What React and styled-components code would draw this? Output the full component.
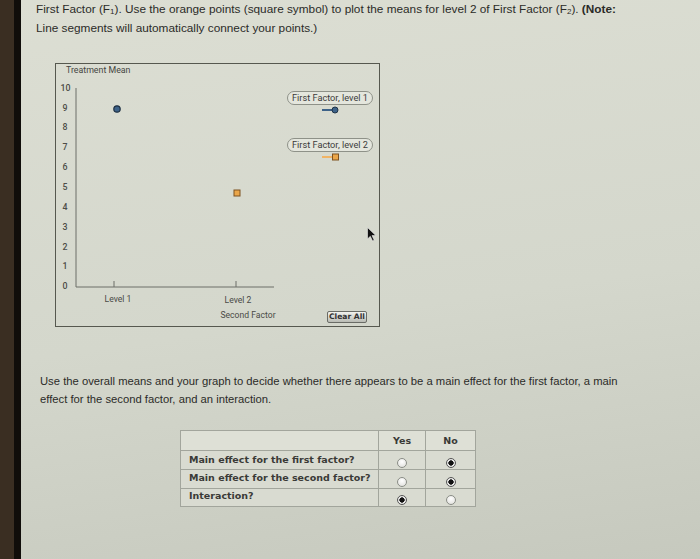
import styled, { createGlobalStyle } from "styled-components";

const GlobalStyle = createGlobalStyle`
  html, body {
    margin: 0;
    padding: 0;
  }
  body {
    background: #1a1410;
  }
`;

const Page = styled.div`
  display: flex;
  width: 700px;
  height: 559px;
  overflow: hidden;
`;

const Bezel = styled.div`
  width: 21px;
  flex-shrink: 0;
  background: linear-gradient(90deg, #3a2e22 0 14px, #100d0a 14px 21px);
`;

const Screen = styled.main`
  flex: 1;
  padding-top: 1px;
  background: linear-gradient(172deg, #dcded3 0%, #d4d7cc 55%, #c6c9be 100%);
  font-family: "Liberation Sans", Arial, sans-serif;
  color: #2b2b28;
`;

const Instructions = styled.p`
  margin: 0 0 0 15px;
  font-size: 11.8px;
  line-height: 17px;
`;

const Sub = styled.sub`
  font-size: 8px;
  vertical-align: -1px;
`;

const ChartPanel = styled.section`
  position: relative;
  box-sizing: border-box;
  display: flex;
  width: 325px;
  height: 264px;
  margin: 26px 0 0 34px;
  border: 1px solid #56584f;
  font-family: Roboto, "Liberation Sans", sans-serif;
`;

const Plot = styled.svg`
  flex-shrink: 0;
  display: block;
`;

const Side = styled.div`
  flex: 1;
  display: flex;
  flex-direction: column;
  align-items: center;
  padding: 27px 0 3px;
`;

const LegendItem = styled.div`
  display: flex;
  flex-direction: column;
  align-items: center;
  gap: 1px;
  margin-bottom: 24px;
`;

const Pill = styled.span`
  display: block;
  box-sizing: border-box;
  height: 14px;
  padding: 0 4px;
  border: 1px solid #8e9188;
  border-radius: 7px;
  background: #e4e6dd;
  font-size: 9.2px;
  line-height: 12px;
  color: #3c3c3a;
  white-space: nowrap;
`;

const ClearButton = styled.button`
  align-self: flex-end;
  margin: auto 12px 0 0;
  box-sizing: border-box;
  width: 40px;
  height: 12px;
  padding: 0;
  border: 1px solid #6a6c66;
  border-radius: 2px;
  background: linear-gradient(#f1f2ee, #b9bbb4);
  font-family: "DejaVu Sans", Verdana, sans-serif;
  font-weight: bold;
  font-size: 7.6px;
  line-height: 10px;
  color: #333;
`;

const Cursor = styled.svg`
  position: absolute;
  left: 311px;
  top: 163px;
`;

const Question = styled.p`
  margin: 45px 0 0 19px;
  font-size: 11.25px;
  line-height: 18px;
`;

const Table = styled.table`
  margin: 22px 0 0 159px;
  width: 296px;
  border-collapse: collapse;
  font-family: "DejaVu Sans", Verdana, sans-serif;
  font-size: 9.5px;
  font-weight: bold;
  color: #3a3a37;
`;

const Head = styled.th`
  height: 19px;
  width: ${p => p.$w || "auto"};
  padding: 0;
  border: 1px solid #a2a59c;
  background: #dee0d6;
  text-align: center;
  vertical-align: middle;
`;

const Row = styled.tr`
  height: ${p => p.$h}px;
`;

const Label = styled.td`
  padding: ${p => p.$top}px 0 0 8px;
  border: 1px solid #a2a59c;
  vertical-align: top;
  line-height: 12px;
  background: #d9dbd1;
`;

const Choice = styled.td`
  padding: 0 0 1px;
  border: 1px solid #a2a59c;
  text-align: center;
  vertical-align: bottom;
  line-height: 0;
  background: #d9dbd1;
`;

const Radio = styled.span`
  display: inline-block;
  box-sizing: border-box;
  width: 10px;
  height: 10px;
  border-radius: 50%;
  border: 1px solid ${p => (p.$checked ? "#555" : "#8a8d86")};
  background: ${p =>
    p.$checked
      ? "radial-gradient(circle, #111 0 2.4px, #e8e8e6 2.9px)"
      : "radial-gradient(circle at 50% 35%, #ffffff, #dcdcd8)"};
`;

const yTicks = [10, 9, 8, 7, 6, 5, 4, 3, 2, 1, 0];
const yOf = v => 222 - 19.85 * v;

const rows = [
  { q: "Main effect for the first factor?", yes: false, h: 19, top: 3 },
  { q: "Main effect for the second factor?", yes: false, h: 19, top: 2 },
  { q: "Interaction?", yes: true, h: 18, top: 1 },
];

function LegendKey({ kind }) {
  return (
    <svg width="20" height="8" viewBox="0 0 20 8">
      {kind === "circle" ? (
        <>
          <line x1="2" y1="4" x2="14" y2="4" stroke="#3d6288" strokeWidth="2" />
          <circle cx="15" cy="4" r="3" fill="#3d6288" stroke="#1f3347" strokeWidth="1" />
        </>
      ) : (
        <>
          <line x1="2" y1="4" x2="13" y2="4" stroke="#f0b466" strokeWidth="2" />
          <rect x="12.5" y="1" width="6" height="6" fill="#eaa64a" stroke="#7e5220" strokeWidth="1" />
        </>
      )}
    </svg>
  );
}

export default function App() {
  return (
    <Page>
      <GlobalStyle />
      <Bezel />
      <Screen>
        <Instructions>
          First Factor (F<Sub>1</Sub>). Use the orange points (square symbol) to plot the means
          for level 2 of First Factor (F<Sub>2</Sub>). <b>(Note:</b>
          <br />
          Line segments will automatically connect your points.)
        </Instructions>

        <ChartPanel>
          <Plot width="225" height="262" viewBox="0 0 225 262">
            <text x="10" y="9" fontSize="8.8" fill="#454542">
              Treatment Mean
            </text>
            {yTicks.map(v => (
              <text
                key={v}
                x={v === 10 ? 4.5 : 6.5}
                y={yOf(v) + 3.2}
                fontSize="8.8"
                fontWeight="500"
                fill="#4d4d48"
              >
                {v}
              </text>
            ))}
            <line x1="20" y1="24" x2="20" y2="223" stroke="#6c6e68" />
            <line x1="20" y1="223" x2="218" y2="223" stroke="#6c6e68" />
            <line x1="58" y1="217" x2="58" y2="223" stroke="#6c6e68" />
            <line x1="180" y1="217" x2="180" y2="223" stroke="#6c6e68" />
            <text x="62" y="238" fontSize="8.6" fill="#4a4a46" textAnchor="middle">
              Level 1
            </text>
            <text x="182" y="239" fontSize="8.6" fill="#4a4a46" textAnchor="middle">
              Level 2
            </text>
            <text x="192" y="254" fontSize="8.6" fill="#4a4a46" textAnchor="middle">
              Second Factor
            </text>
            <circle cx="61" cy="45" r="3.2" fill="#3d6288" stroke="#1d2f42" strokeWidth="1.2" />
            <rect x="178" y="126" width="6" height="6" fill="#eaa64a" stroke="#7e5220" strokeWidth="1" />
          </Plot>

          <Side>
            <LegendItem>
              <Pill>First Factor, level 1</Pill>
              <LegendKey kind="circle" />
            </LegendItem>
            <LegendItem>
              <Pill>First Factor, level 2</Pill>
              <LegendKey kind="square" />
            </LegendItem>
            <ClearButton>Clear All</ClearButton>
          </Side>

          <Cursor width="10" height="15" viewBox="0 0 10 15">
            <path
              d="M0.5 0.5 L0.5 12 L3.3 9.3 L5.6 14 L7.2 13.2 L5 8.6 L8.8 8.6 Z"
              fill="#111"
              stroke="#eee"
              strokeWidth="0.6"
            />
          </Cursor>
        </ChartPanel>

        <Question>
          Use the overall means and your graph to decide whether there appears to be a main effect
          for the first factor, a main
          <br />
          effect for the second factor, and an interaction.
        </Question>

        <Table>
          <thead>
            <tr>
              <Head />
              <Head $w="46px">Yes</Head>
              <Head $w="49px">No</Head>
            </tr>
          </thead>
          <tbody>
            {rows.map(r => (
              <Row key={r.q} $h={r.h}>
                <Label $top={r.top}>{r.q}</Label>
                <Choice>
                  <Radio $checked={r.yes} />
                </Choice>
                <Choice>
                  <Radio $checked={!r.yes} />
                </Choice>
              </Row>
            ))}
          </tbody>
        </Table>
      </Screen>
    </Page>
  );
}
